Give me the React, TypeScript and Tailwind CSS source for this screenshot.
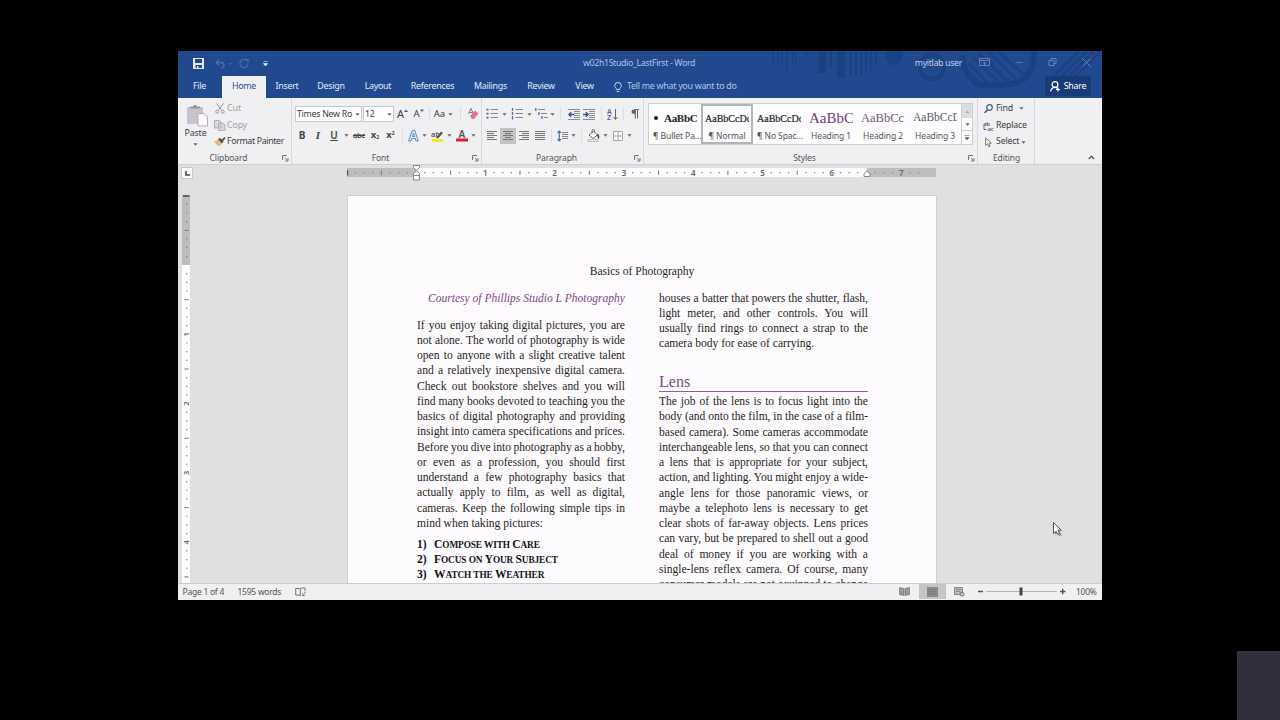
import React from "react";

type Kids = { c?: string; children?: React.ReactNode };

const Cell = ({ c = "", children }: Kids) => (
  <div className={`flex shrink-0 items-center justify-center ${c}`}>{children}</div>
);

const Caret = ({ c = "w-[8px]" }: Kids) => (
  <Cell c={c}>
    <svg width="5" height="3" viewBox="0 0 5 3"><path d="M0.4 0.2h4.2L2.5 2.8z" fill="#666" /></svg>
  </Cell>
);

const Sep = ({ c = "w-[6px]" }: Kids) => (
  <Cell c={c}><div className="h-[14px] w-px bg-[#dddce0]" /></Cell>
);

const Launcher = () => (
  <svg width="7" height="7" viewBox="0 0 7 7" fill="none" stroke="#777" strokeWidth="1">
    <path d="M0.5 5V0.5H5M2.5 2.5L5.5 5.5M6 3v3H3" />
  </svg>
);

const Group = ({ c = "", label, launcher, children }: Kids & { label: string; launcher?: boolean }) => (
  <section className={`flex h-full shrink-0 flex-col border-r border-[#d8d7da] ${c}`}>
    <div className="h-[54px]">{children}</div>
    <div className="flex h-[12px] items-center pr-[2px]">
      <span className="w-[3px]" />
      <span className="flex-1 text-center text-[8.5px] leading-[12px] tracking-[-0.1px] text-[#555]">{label}</span>
      {launcher && <span className="w-[13px] pl-[6px]"><Launcher /></span>}
    </div>
  </section>
);

const Lines = ({ rows }: { rows: number[][] }) => (
  <svg width="12" height="10" viewBox="0 0 12 10" stroke="#777" strokeWidth="1">
    {rows.map(([a, b], i) => <path key={i} d={`M${a} ${i * 2 + 0.5}H${b}`} />)}
  </svg>
);

const ListIcon = ({ kind }: { kind: "dot" | "num" | "multi" }) => (
  <svg width="13" height="12" viewBox="0 0 13 12" fill="none">
    {kind === "multi" ? (
      <>
        <path d="M3 1.5h7M6 5.5h6M9 9.5h4" stroke="#888" />
        <path d="M0.8 0v3M4 4v3M7 8v3" stroke="#4a6ea9" strokeWidth="1.3" />
      </>
    ) : (
      <>
        <path d="M4.5 1.5H12M4.5 5.5H12M4.5 9.5H12" stroke="#888" />
        {kind === "dot"
          ? <path d="M0.5 0.7h2v1.8h-2zM0.5 4.7h2v1.8h-2zM0.5 8.7h2v1.8h-2z" fill="#4a5f94" />
          : <path d="M1.5 0v3M1.5 4v3M1.5 8v3.5" stroke="#4a6ea9" strokeWidth="1.3" />}
      </>
    )}
  </svg>
);

const IndentIcon = ({ right }: { right?: boolean }) => (
  <svg width="12" height="11" viewBox="0 0 12 11" fill="none">
    <path d="M0 0.5h12M6 2.5h6M6 4.5h6M6 6.5h6M6 8.5h6M0 10.5h12" stroke="#8b8b90" />
    <path d={right ? "M0 5.5h4.5M2.8 3.2L5 5.5 2.8 7.8" : "M1 5.5h5M3.2 3.2L1 5.5l2.2 2.3"} stroke="#2f5597" strokeWidth="1.4" />
  </svg>
);

const StyleCard = ({ sample, name, s = "", active, bullet }: { sample: string; name: string; s?: string; active?: boolean; bullet?: boolean }) => (
  <div className={`flex w-[52px] shrink-0 flex-col overflow-hidden ${active ? "border-2 border-[#b5b4b7] px-[2px]" : "px-[4px] py-[2px]"}`}>
    <div className={`flex h-[24px] items-center overflow-hidden whitespace-nowrap font-['Liberation_Serif',serif] ${s}`}>
      {bullet && <span className="mr-[6px] ml-[1px] size-[4px] shrink-0 rounded-full bg-[#222]" />}
      <span>{sample}</span>
    </div>
    <div className="whitespace-nowrap text-center text-[8.5px] leading-[11px] tracking-[-0.1px] text-[#555]">{name}</div>
  </div>
);

const Horizontal = () => (
  <svg width="589" height="16" viewBox="0 0 589 16" className="block">
    <rect x="0" y="3" width="69" height="9" fill="#bdbcbe" />
    <rect x="69" y="3" width="451" height="9" fill="#fdfcfe" />
    <rect x="520" y="3" width="69" height="9" fill="#bdbcbe" />
    {Array.from({ length: 66 }, (_, i) => i - 7).map((i) => {
      const x = 69 + i * 8.664;
      if (i === 0 || i === 52 || x > 585) return null;
      if (i % 8 === 0) return <text key={i} x={x} y="10.5" textAnchor="middle" fontSize="8" fontWeight="600" fill="#666">{i / 8}</text>;
      return i % 4 === 0
        ? <path key={i} d={`M${x} 5.5v4.5`} stroke="#777" />
        : <path key={i} d={`M${x - 0.6} 7.7h1.3`} stroke="#888" strokeWidth="1.2" />;
    })}
    <path d="M0.5 5v5.5" stroke="#555" strokeWidth="1.5" />
    <path d="M66.5 0.5h6v2l-3 3.2-3-3.2zM69.5 5.7l3 3v6.3h-6V8.7zM66.5 10.5h6" fill="#fafafa" stroke="#888" />
    <path d="M520 5.7l3 3.2v2.6h-6V8.9z" fill="#fafafa" stroke="#888" />
  </svg>
);

const Vertical = () => (
  <svg width="8" height="388" viewBox="0 0 8 388" className="block">
    <rect width="8" height="70" fill="#bdbcbe" />
    <rect y="70" width="8" height="318" fill="#fdfcfe" />
    <path d="M1 1h6.5" stroke="#666" strokeWidth="2" />
    {Array.from({ length: 44 }, (_, i) => i - 7).map((i) => {
      const y = 70 + i * 8.664;
      if (i === 0) return null;
      if (i % 8 === 0) return <text key={i} transform={`translate(7 ${y}) rotate(-90)`} textAnchor="middle" fontSize="7.5" fontWeight="600" fill="#666">{i / 8}</text>;
      return i % 4 === 0
        ? <path key={i} d={`M2.5 ${y}h4`} stroke="#777" />
        : <path key={i} d={`M4 ${y}h1.3`} stroke="#888" strokeWidth="1.2" />;
    })}
  </svg>
);

const Para = ({ lines, lastLeft }: { lines: string[]; lastLeft?: boolean }) => (
  <>
    {lines.map((l, i) => (
      <p key={l} className={`h-[15.28px] whitespace-nowrap leading-[15.28px] ${lastLeft && i === lines.length - 1 ? "text-left" : "text-justify [text-align-last:justify] [word-spacing:-0.5px]"}`}>{l}</p>
    ))}
  </>
);

const intro = [
  "If you enjoy taking digital pictures, you are",
  "not alone. The world of photography is wide",
  "open to anyone with a slight creative talent",
  "and a relatively inexpensive digital camera.",
  "Check out bookstore shelves and you will",
  "find many books devoted to teaching you the",
  "basics of digital photography and providing",
  "insight into camera specifications and prices.",
  "Before you dive into photography as a hobby,",
  "or even as a profession, you should first",
  "understand a few photography basics that",
  "actually apply to film, as well as digital,",
  "cameras. Keep the following simple tips in",
  "mind when taking pictures:",
];
const body = [
  "houses a batter that powers the shutter, flash,",
  "light meter, and other controls. You will",
  "usually find rings to connect a strap to the",
  "camera body for ease of carrying.",
];
const lens = [
  "The job of the lens is to focus light into the",
  "body (and onto the film, in the case of a film-",
  "based camera). Some cameras accommodate",
  "interchangeable lens, so that you can connect",
  "a lens that is appropriate for your subject,",
  "action, and lighting. You might enjoy a wide-",
  "angle lens for those panoramic views, or",
  "maybe a telephoto lens is necessary to get",
  "clear shots of far-away objects. Lens prices",
  "can vary, but be prepared to shell out a good",
  "deal of money if you are working with a",
  "single-lens reflex camera. Of course, many",
  "consumer models are not equipped to change",
];

const TitleBar = () => (
  <header className="relative h-[47px] bg-[#20498f] text-[#e4ebf8]">
    <svg width="340" height="47" viewBox="0 0 340 47" className="absolute top-0 right-0" fill="none" stroke="#1c4183">
      <path d="M11 0v12M16 0v16M20 0v12M25 0v23M31 0v14M34 0v14M43 0v6M46 0v6M50 0v4" strokeWidth="1.5" />
      <path d="M60 0v22M79 0v27" strokeWidth="8" />
      <path d="M69 0v16M89 0v24M94 0v24M99 0v24M104 0v20M109 0v20M114 0v14" strokeWidth="2" />
      <path d="M123 0h18c0 6-3 14-9 14s-9-8-9-14z" fill="#1c4183" stroke="none" />
      <circle cx="170" cy="16" r="12" strokeWidth="4" />
      <path d="M163 14h14" strokeWidth="3" />
      <path d="M200 4c1 14 6 20 16 30h22c26 0 34-12 34-34" strokeWidth="6" />
      <path d="M206 12l20 20M210 5l28 28M217 2l30 30M226 0l30 30M236 0l26 24" strokeWidth="2" />
      <path d="M292 25L317 0M297 28L325 0M304 28L332 0M311 28L339 0" strokeWidth="2" />
    </svg>
    <div className="relative flex h-[25px] items-center">
      <Cell c="h-[25px] w-[41px]">
        <svg width="11" height="11" viewBox="0 0 11 11"><path fillRule="evenodd" d="M0 0h11v11H0zM2 1v4h7V1zM2.5 7v3h1.5V8h1.5v2H9V7z" fill="#e4ebf8" /></svg>
      </Cell>
      <Cell c="-ml-[4px] w-[18px]">
        <svg width="18" height="10" viewBox="0 0 18 10" fill="none" stroke="#4b6dab" strokeWidth="1.3"><path d="M4 0.5L1 3.5l3 3M1 3.5h5c4 0 4 5.5 0 5.5" /><path d="M14 4l1.5 1.5L17 4" strokeWidth="1" /></svg>
      </Cell>
      <Cell c="ml-[6px] w-[10px]">
        <svg width="10" height="10" viewBox="0 0 10 10" fill="none" stroke="#4b6dab" strokeWidth="1.3"><path d="M7.5 1.5A4 4 0 1 0 9 5M5.5 0.6H9v3.3" /></svg>
      </Cell>
      <Cell c="ml-[14px] w-[5px]">
        <svg width="5" height="6" viewBox="0 0 5 6"><path d="M0.5 0.5h4M0.3 2.5h4.4L2.5 5z" fill="#e4ebf8" stroke="#e4ebf8" strokeWidth="0.6" /></svg>
      </Cell>
      <span className="ml-[315px] h-[22px] w-[130px] whitespace-nowrap text-[8.8px] leading-[20px] tracking-[-0.36px] text-[#b0c0e0]">w02h1Studio_LastFirst - Word</span>
      <span className="ml-auto h-[22px] whitespace-nowrap text-[8.8px] leading-[20px] tracking-[-0.34px] text-[#c0cde7]">myitlab user</span>
      <div className="ml-[17px] flex h-[22px] w-[123px] items-center justify-between pr-[11px] pb-[2px]">
        <svg width="11" height="9" viewBox="0 0 11 9" fill="none" stroke="#6482b9"><path d="M0.5 0.5h10v7h-10zM0.5 2.5h10M5.5 7V4M4 5.5L5.5 4 7 5.5" /></svg>
        <svg width="9" height="9" viewBox="0 0 9 9" stroke="#5575af"><path d="M1 4.5h7" /></svg>
        <svg width="9" height="9" viewBox="0 0 9 9" fill="none" stroke="#6482b9"><path d="M1 2.5h5v5H1zM3 2.5v-2h5v5H6" /></svg>
        <svg width="9" height="9" viewBox="0 0 9 9" stroke="#6482b9"><path d="M0.5 0.5l8 8M8.5 0.5l-8 8" /></svg>
      </div>
    </div>
    <nav className="relative flex h-[22px] text-[8.9px] leading-[20px] tracking-[-0.28px] whitespace-nowrap">
      <Cell c="w-[43px] pb-[2px]">File</Cell>
      <Cell c="ml-px w-[44px] bg-[#f0eff2] pb-[2px] text-[#2b4f93]">Home</Cell>
      <Cell c="w-[42px] pb-[2px]">Insert</Cell>
      <Cell c="w-[46px] pb-[2px]">Design</Cell>
      <Cell c="w-[48px] pb-[2px]">Layout</Cell>
      <Cell c="w-[61px] pb-[2px]">References</Cell>
      <Cell c="w-[55px] pb-[2px]">Mailings</Cell>
      <Cell c="w-[46px] pb-[2px]">Review</Cell>
      <Cell c="w-[41px] pb-[2px]">View</Cell>
      <Cell c="w-[22px] pl-[3px]">
        <svg width="8" height="11" viewBox="0 0 8 11" fill="none" stroke="#c9d6ee"><path d="M2.5 7.5C2.5 6 0.7 5.5 0.7 3.6a3.3 3.1 0 0 1 6.6 0C7.3 5.5 5.5 6 5.5 7.5zM2.7 9.5h2.6" /></svg>
      </Cell>
      <span className="text-[#b4c5e4]">Tell me what you want to do</span>
      <Cell c="mr-[11px] ml-auto h-[20px] w-[46px] gap-[3px] bg-[#183a76] text-white">
        <svg width="11" height="11" viewBox="0 0 11 11" fill="none" stroke="#fff" strokeWidth="1.2"><circle cx="5" cy="3.5" r="2.9" /><path d="M0.7 10.5C1 7.5 3 6.3 5 6.3c1 0 2 .5 2.5 1M8 6.5v4M6 8.5h4" /></svg>
        <span>Share</span>
      </Cell>
    </nav>
  </header>
);

const Ribbon = () => (
  <div className="flex h-[67px] border-b border-[#cfced1] bg-[#f0eff2] text-[#3d3c40]">
    <Group c="w-[114px]" label="Clipboard" launcher>
      <div className="flex">
        <div className="flex w-[35px] flex-col items-center pt-[6px]">
          <svg width="21" height="23" viewBox="0 0 21 23" className="ml-[3px]">
            <path d="M0 3h16v17H0z" fill="#c9c1ce" />
            <path d="M3 2.5h3C6 0.5 10 0.5 10 2.5h3v2H3z" fill="#9a979d" />
            <path d="M11 9.5h6l3.5 3.5v9H11z" fill="#fbfafc" stroke="#b4b0ba" />
          </svg>
          <span className="text-[8.8px] leading-[13px] tracking-[-0.1px]">Paste</span>
          <Caret c="h-[8px] w-[8px]" />
        </div>
        <div className="flex flex-col pt-[2px] text-[8.8px] leading-[16.7px] tracking-[-0.35px] whitespace-nowrap">
          <div className="flex h-[16.7px] items-center text-[#a09ea3]">
            <Cell c="w-[14px]"><svg width="10" height="11" viewBox="0 0 10 11" fill="none" stroke="#999"><path d="M1.5 0.5L7 7.5M8.5 0.5L3 7.5" /><circle cx="2.2" cy="8.7" r="1.5" /><circle cx="7.8" cy="8.7" r="1.5" /></svg></Cell>
            <span className="tracking-[0px]">Cut</span>
          </div>
          <div className="flex h-[16.7px] items-center text-[#a09ea3]">
            <Cell c="w-[14px]"><svg width="12" height="11" viewBox="0 0 12 11" fill="#dcd6e0" stroke="#b3adb8"><path d="M0.5 0.5h5l1.5 1.5v6H0.5zM4.5 3h4.5l2 2v5.5H4.5z" /></svg></Cell>
            <span className="tracking-[-0.1px]">Copy</span>
          </div>
          <div className="flex h-[16.7px] items-center">
            <Cell c="w-[14px]"><svg width="12" height="10" viewBox="0 0 12 10"><path d="M0 5l4-2.5 4 4L5 9.5z" fill="#e8b572" /><path d="M4 2l2-1 3.5 3.5L8 6.5z" fill="#444" /><path d="M7.5 2.5L10.5 0 11.5 1 9.5 4z" fill="#555" /></svg></Cell>
            <span>Format Painter</span>
          </div>
        </div>
      </div>
    </Group>
    <Group c="w-[190px]" label="Font" launcher>
      <div className="flex h-[27px] items-center pt-[5px] pl-[3px] text-[8.8px]">
        <div className="flex h-[16px] w-[67px] items-center border border-[#c8c7ca] bg-white pt-px pl-[1px] whitespace-nowrap"><span className="w-[58px] tracking-[-0.28px]">Times New Ro</span><Caret c="w-[7px]" /></div>
        <div className="ml-px flex h-[16px] w-[31px] items-center border border-[#c8c7ca] bg-white pt-px pl-[1px]"><span className="w-[21px] tracking-[-0.2px]">12</span><Caret c="w-[7px]" /></div>
        <Cell c="w-[17px]"><span className="text-[11px]">A</span><svg width="4" height="10" viewBox="0 0 4 10"><path d="M0 3L2 0.5 4 3z" fill="#3d5f9c" /></svg></Cell>
        <Cell c="w-[15px]"><span className="text-[9.5px]">A</span><svg width="4" height="10" viewBox="0 0 4 10"><path d="M0 0.5h4L2 3z" fill="#3d5f9c" /></svg></Cell>
        <Sep c="w-[6px]" />
        <Cell c="w-[15px] text-[9.5px]">Aa</Cell>
        <Caret c="w-[7px]" />
        <Sep c="w-[12px]" />
        <Cell c="w-[14px]"><svg width="12" height="12" viewBox="0 0 12 12"><path d="M1.5 6L4 0.5 6.5 6M2.5 4.5h3" fill="none" stroke="#777" /><path d="M3 8l5-5.5 3.5 3L7 11H5z" fill="#e0738f" /></svg></Cell>
      </div>
      <div className="flex h-[20px] items-center pt-[1px] pl-[2px] text-[9.5px] text-[#444]">
        <Cell c="w-[16px] text-[10px] font-bold">B</Cell>
        <Cell c="w-[16px] font-['Liberation_Serif',serif] text-[11px] font-bold italic">I</Cell>
        <Cell c="w-[16px] text-[10px] font-semibold underline">U</Cell>
        <Caret c="w-[9px]" />
        <Cell c="w-[16px] text-[7.5px] font-semibold tracking-[-0.3px] line-through">abc</Cell>
        <Cell c="w-[16px] font-bold">x<sub className="text-[5px]">2</sub></Cell>
        <Cell c="w-[15px] font-bold">x<sup className="text-[5px]">2</sup></Cell>
        <Sep c="w-[8px]" />
        <Cell c="w-[14px]"><svg width="11" height="12" viewBox="0 0 11 12" fill="none" stroke="#5f8ac9"><path d="M0.7 11L4.2 0.7h2.6L10.3 11H8L7.3 8.5H3.7L3 11zM4.3 6.5h2.4L5.5 3z" /></svg></Cell>
        <Caret c="w-[8px]" />
        <Cell c="w-[18px]"><svg width="14" height="14" viewBox="0 0 14 14" overflow="visible"><rect x="2" y="10" width="11" height="3" fill="#f2ea1c" /><text x="1" y="8" fontSize="7.5" fontWeight="600" fill="#555">ab</text><path d="M6 9l5-6.500L13 4 8 9.500z" fill="#555" /></svg></Cell>
        <Caret c="w-[7px]" />
        <Cell c="w-[17px]"><svg width="12" height="13" viewBox="0 0 12 13" overflow="visible"><text x="2.500" y="8.500" fontSize="10" fontWeight="600" fill="#555">A</text><rect y="9.500" width="12" height="3" fill="#d8232a" /></svg></Cell>
        <Caret c="w-[7px]" />
      </div>
    </Group>
    <Group c="w-[162px]" label="Paragraph" launcher>
      <div className="flex h-[27px] items-center pt-[5px] pl-[3px]">
        <Cell c="w-[15px]"><ListIcon kind="dot" /></Cell>
        <Caret c="w-[9px]" />
        <Cell c="w-[16px]"><ListIcon kind="num" /></Cell>
        <Caret c="w-[8px]" />
        <Cell c="w-[17px]"><ListIcon kind="multi" /></Cell>
        <Caret c="w-[5px]" />
        <Sep c="w-[11px]" />
        <Cell c="w-[15px]"><IndentIcon /></Cell>
        <Cell c="w-[16px]"><IndentIcon right /></Cell>
        <Sep c="w-[9px]" />
        <Cell c="w-[13px]"><svg width="11" height="13" viewBox="0 0 11 13" fill="none" overflow="visible"><text x="0" y="6" fontSize="7" fontWeight="600" fill="#4a6ea9">A</text><text x="0" y="12" fontSize="7" fontWeight="600" fill="#70588c">Z</text><path d="M8.500 1v10M6.500 9l2 2.500 2-2.500" stroke="#666" /></svg></Cell>
        <Sep c="w-[9px]" />
        <Cell c="w-[13px]"><svg width="8" height="10" viewBox="0 0 8 10"><path d="M3.500 0.500H8M4.300 0v9.500M6.500 0v9.500" stroke="#666" fill="none" /><circle cx="2.800" cy="2.800" r="2.300" fill="#666" /></svg></Cell>
      </div>
      <div className="flex h-[20px] items-center pt-[1px] pl-[2px]">
        <Cell c="w-[16px]"><Lines rows={[[1, 11], [1, 8], [1, 11], [1, 8], [1, 11]]} /></Cell>
        <Cell c="h-[16px] w-[16px] bg-[#c3c2c5]"><Lines rows={[[1, 11], [3, 9], [1, 11], [3, 9], [1, 11]]} /></Cell>
        <Cell c="w-[16px]"><Lines rows={[[1, 11], [4, 11], [1, 11], [4, 11], [1, 11]]} /></Cell>
        <Cell c="w-[16px]"><Lines rows={[[1, 11], [1, 11], [1, 11], [1, 11], [1, 11]]} /></Cell>
        <Sep c="w-[7px]" />
        <Cell c="w-[15px]"><svg width="11" height="12" viewBox="0 0 11 12" fill="none"><path d="M5 2.500h6M5 4.500h6M5 6.500h6M5 8.500h6" stroke="#888" /><path d="M2.200 1v10M0.500 2.800L2.200 1 4 2.800M0.500 9.200L2.200 11 4 9.200" stroke="#3d6cae" strokeWidth="1.200" /></svg></Cell>
        <Caret c="w-[7px]" />
        <Sep c="w-[9px]" />
        <Cell c="w-[15px]"><svg width="13" height="13" viewBox="0 0 13 13"><path d="M2 6l4.500-4 4 4L6 9.500z" fill="#fff" stroke="#666" /><path d="M5 4V1.500c0-1.500 2.500-1.500 2.500 0V3" fill="none" stroke="#666" /><path d="M10.500 5c1.500 1 1.500 3 1 4.500z" stroke="#444" fill="#444" /><path d="M1 10.500h10v2H1z" fill="#e8e8e8" stroke="#aaa" strokeWidth="0.700" /></svg></Cell>
        <Caret c="w-[8px]" />
        <Cell c="w-[17px]"><svg width="10" height="10" viewBox="0 0 10 10" fill="#fff" stroke="#a5a4a8"><path d="M0.500 0.500h9v9h-9zM5 0.500v9M0.500 5h9" /></svg></Cell>
        <Caret c="w-[7px]" />
      </div>
    </Group>
    <Group c="w-[334px]" label="Styles" launcher>
      <div className="flex pt-[5px] pl-[4px]">
        <div className="flex h-[42px] w-[325px] border border-[#cfced1] bg-[#fdfcfe] text-[#222]">
          <StyleCard sample="AaBbC" name="¶ Bullet Pa..." s="text-[11px] font-semibold tracking-[-0.3px]" bullet />
          <StyleCard sample="AaBbCcDd" name="¶ Normal" s="text-[10px] h-[22px] [-webkit-text-stroke:0.2px]" active />
          <StyleCard sample="AaBbCcDd" name="¶ No Spac..." s="text-[10px] [-webkit-text-stroke:0.2px]" />
          <StyleCard sample="AaBbCc" name="Heading 1" s="text-[15px] text-[#6f3f78]" />
          <StyleCard sample="AaBbCc" name="Heading 2" s="text-[12.5px] text-[#6f5578]" />
          <StyleCard sample="AaBbCcD" name="Heading 3" s="text-[11.5px] text-[#5f5868]" />
          <div className="flex flex-1 flex-col border-l border-[#cfced1]">
            <Cell c="h-[14px] bg-[#dddcdf]"><svg width="5" height="3"><path d="M0.500 3h4L2.500 0.500z" fill="#aaa" /></svg></Cell>
            <Caret c="h-[13px] w-full border-b border-[#cfced1]" />
            <Cell c="h-[13px]"><svg width="6" height="6" viewBox="0 0 6 6"><path d="M0.500 0.500h5M1 2.500h4L3 5z" fill="#666" stroke="#666" strokeWidth="0.600" /></svg></Cell>
          </div>
        </div>
      </div>
    </Group>
    <Group c="w-[57px]" label="Editing">
      <div className="flex flex-col pt-[2px] pl-[3px] text-[8.8px] tracking-[-0.2px] whitespace-nowrap">
        <div className="flex h-[17px] items-center">
          <Cell c="w-[15px]"><svg width="9" height="10" viewBox="0 0 9 10" fill="none" stroke="#3d5f9c"><circle cx="5.500" cy="3.500" r="2.800" strokeWidth="1.200" /><path d="M3.500 5.700L0.600 9" strokeWidth="1.600" /></svg></Cell>
          <span className="w-[21px]">Find</span><Caret c="w-[9px]" />
        </div>
        <div className="flex h-[17px] items-center">
          <Cell c="w-[15px]"><svg width="12" height="12" viewBox="0 0 12 12" fill="none" overflow="visible"><text x="0" y="5.500" fontSize="6" fontWeight="600" fill="#555">ab</text><text x="4.500" y="11" fontSize="6" fontWeight="600" fill="#70588c">ac</text><path d="M1 6.500v3h2.500" stroke="#3d6cae" /></svg></Cell>
          <span>Replace</span>
        </div>
        <div className="flex h-[16px] items-center">
          <Cell c="w-[15px]"><svg width="7" height="11" viewBox="0 0 7 11" fill="#fff" stroke="#777"><path d="M0.700 1v7.500l1.800-1.700 1.300 3 1.300-.6-1.200-2.900h2.400z" /></svg></Cell>
          <span>Select</span><Caret c="w-[8px]" />
        </div>
      </div>
    </Group>
    <div className="flex flex-1 items-end justify-end pr-[7px] pb-[4px]">
      <svg width="7" height="5" viewBox="0 0 7 5" fill="none" stroke="#555" strokeWidth="1.300"><path d="M0.700 4L3.500 1.200 6.300 4" /></svg>
    </div>
  </div>
);

const Tip = ({ n, words }: { n: string; words: string[] }) => (
  <li className="flex h-[15.28px] leading-[15.28px] whitespace-nowrap">
    <span className="w-[17px]">{n})</span>
    <span className="text-[9.3px] tracking-[-0.1px] uppercase">
      {words.map((w, i) => (
        <React.Fragment key={i}>
          {i > 0 && " "}
          {w[0] === w[0].toUpperCase() ? <><span className="text-[11.55px]">{w[0]}</span>{w.slice(1)}</> : w}
        </React.Fragment>
      ))}
    </span>
  </li>
);

const Document = () => (
  <main className="relative flex h-[418px] flex-col overflow-hidden bg-[#e1e0e1]">
    <div className="flex h-[30px] shrink-0">
      <div className="mt-[2px] ml-[3px] flex size-[12px] items-center justify-center border border-[#c8c7c9] bg-[#fbfafc]">
        <svg width="5" height="5" viewBox="0 0 5 5" fill="none" stroke="#444" strokeWidth="1.500"><path d="M1 0v4h4" /></svg>
      </div>
      <div className="ml-[154px]"><Horizontal /></div>
    </div>
    <div className="flex min-h-0 flex-1">
      <div className="ml-[4px] w-[8px]"><Vertical /></div>
      <article className="ml-[157px] flex h-[388px] w-[590px] flex-col overflow-hidden border border-b-0 border-[#d0cfd1] bg-[#fdfbfe] pr-[68px] pl-[69px] font-['Liberation_Serif',serif] text-[11.55px] text-[#1f1e21]">
        <h1 className="mt-[67px] h-[16px] shrink-0 pr-[1px] text-center leading-[16px]">Basics of Photography</h1>
        <div className="flex justify-between pt-[11.5px]">
          <div className="w-[208px]">
            <p className="h-[15px] text-right leading-[15px] whitespace-nowrap text-[#7d4886] italic">Courtesy of Phillips Studio L Photography</p>
            <div className="pt-[12px]"><Para lines={intro} lastLeft /></div>
            <ol className="pt-[5.5px] font-bold text-[#141316]">
              <Tip n="1" words={["Compose", "with", "Care"]} />
              <Tip n="2" words={["Focus", "on", "Your", "Subject"]} />
              <Tip n="3" words={["Watch", "the", "Weather"]} />
            </ol>
          </div>
          <div className="w-[209px]">
            <Para lines={body} lastLeft />
            <h2 className="mt-[18px] h-[22px] border-b border-[#96599c] text-[16px] leading-[23px] text-[#7d4886]">Lens</h2>
            <div className="pt-[2.5px]"><Para lines={lens} /></div>
          </div>
        </div>
      </article>
    </div>
    <svg width="12" height="16" viewBox="0 0 12 16" className="absolute top-[356px] left-[874px]">
      <path d="M3 3v11l2.500-2 1.500 3 3-.5z" fill="#999" />
      <path d="M1.500 1.500v11l2.600-2.300 1.600 3 1.800-.9-1.500-3h3.300z" fill="#fff" stroke="#555" />
    </svg>
  </main>
);

const StatusBar = () => (
  <footer className="flex h-[17px] items-center border-t border-[#cdccce] bg-[#f0eff1] pb-px pl-[4.5px] text-[8.5px] leading-[14px] tracking-[-0.25px] whitespace-nowrap text-[#555]">
    <span className="w-[55px]">Page 1 of 4</span>
    <span className="w-[57px]">1595 words</span>
    <svg width="11" height="10" viewBox="0 0 11 10" fill="none" stroke="#777"><path d="M5 1.500H0.700v6.500H4l1.200 1M5.300 1.500v7.500M5.300 1.500L6.500 1H10v3M7 6l1.500 1.500L11 4.500M7 8.500h3" /></svg>
    <div className="ml-auto flex h-full items-center">
      <Cell c="w-[28px]"><svg width="11" height="9" viewBox="0 0 11 9"><path d="M0.500 0.500l4.500 1v7l-4.500-1zM10.500 0.500L6 1.500v7l4.500-1z" fill="#999" stroke="#777" strokeWidth="0.700" /></svg></Cell>
      <Cell c="h-full w-[27px] bg-[#c5c4c6]"><svg width="11" height="10" viewBox="0 0 11 10"><path d="M0 0h11v10H0z" fill="#8a898b" /><path d="M2 2.500h7M2 4.500h7M2 6.500h7" stroke="#777" strokeWidth="0.700" /></svg></Cell>
      <Cell c="w-[28px]"><svg width="11" height="10" viewBox="0 0 11 10"><path d="M0.500 0.500h8v7h-8z" fill="#bbb" stroke="#888" /><path d="M2 2.500h5M2 4.500h4" stroke="#888" /><circle cx="8" cy="7" r="2.500" fill="#888" /><path d="M7 7l1 1 1.500-2" stroke="#eee" fill="none" /></svg></Cell>
      <svg width="91" height="11" viewBox="0 0 91 11" className="ml-[2px]"><path d="M2 5.500h5M84 5.500h5.500M86.700 2.700v5.600" stroke="#555" strokeWidth="1.400" /><path d="M10 5.500h71" stroke="#b5b4b6" /><rect x="43.500" y="1.500" width="3" height="8" fill="#444" /></svg>
      <span className="mr-[6.5px] ml-[9.5px] w-[19.500px]">100%</span>
    </div>
  </footer>
);

export default function App() {
  return (
    <div className="flex h-[720px] w-[1280px] flex-col overflow-hidden bg-black font-['Noto_Sans',sans-serif]">
      <div className="mt-[51px] ml-[178px] h-[549px] w-[924px] overflow-hidden">
        <TitleBar />
        <Ribbon />
        <Document />
        <StatusBar />
      </div>
      <div className="mt-auto ml-auto h-[69px] w-[43px] bg-[#312f3e]" />
    </div>
  );
}
